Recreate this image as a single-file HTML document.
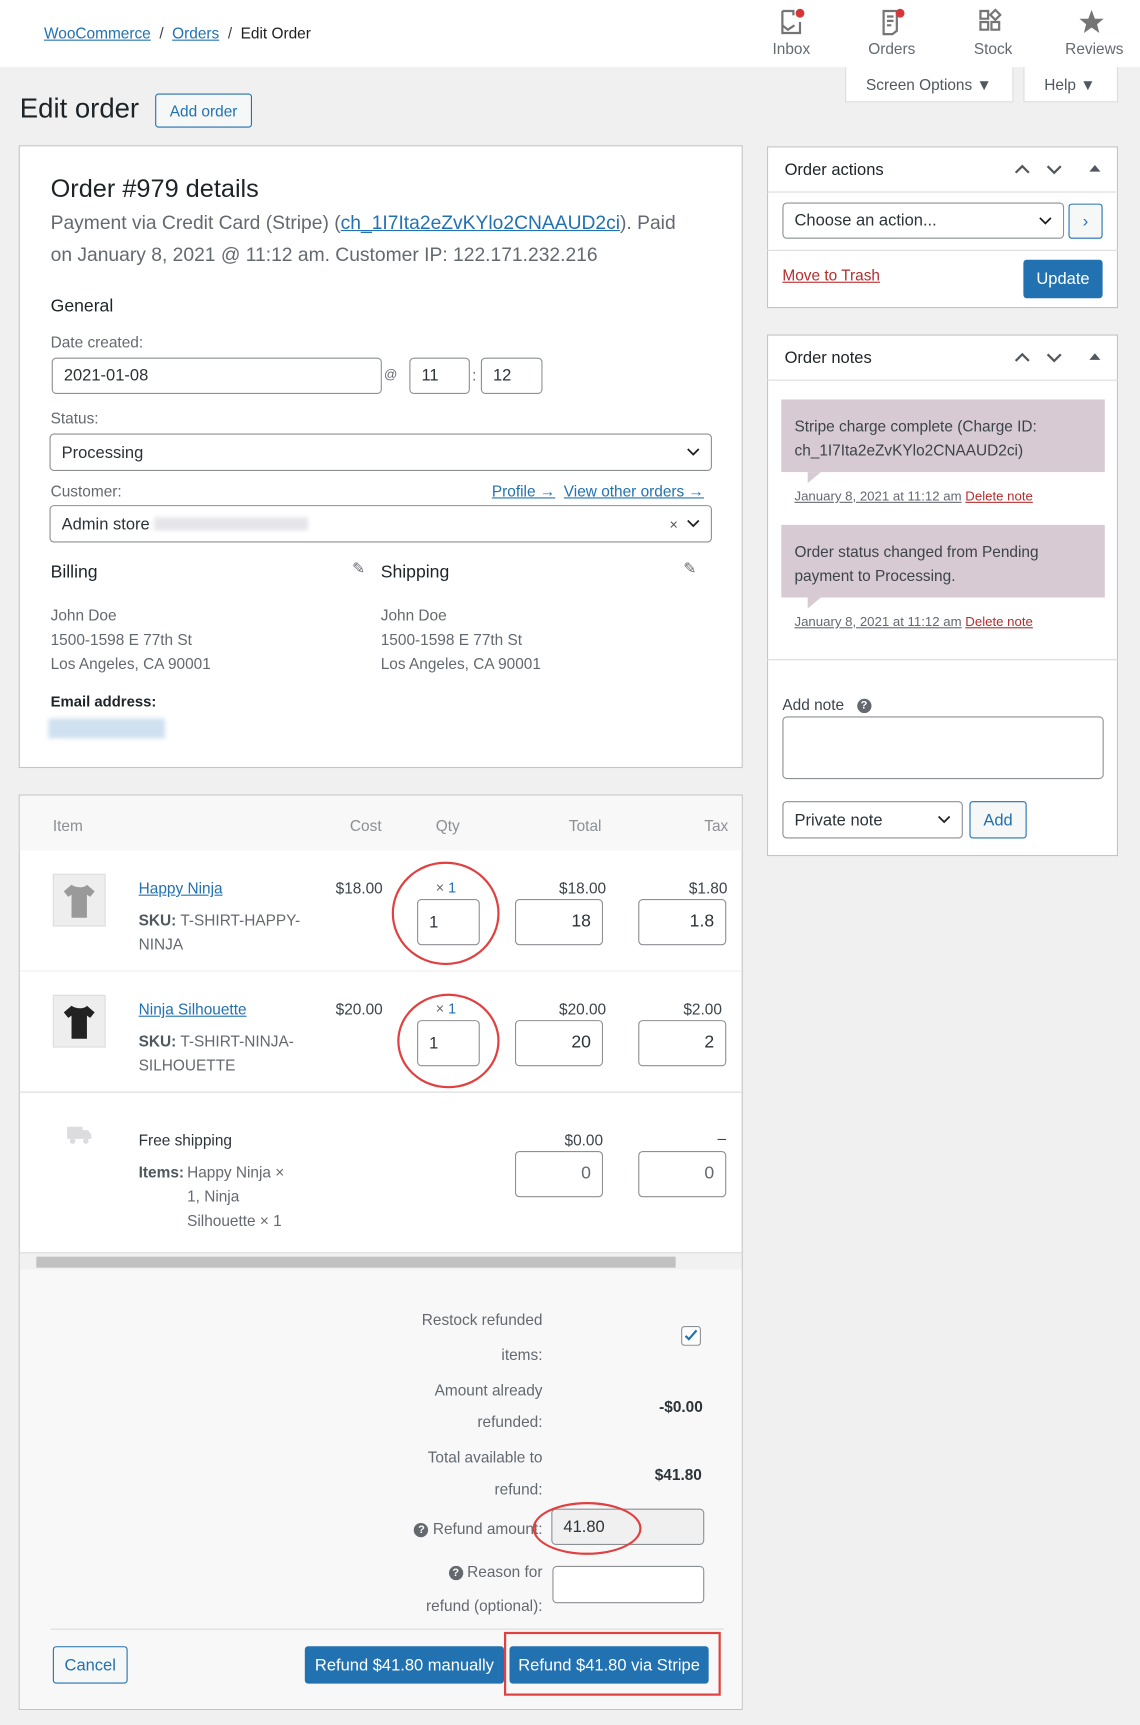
<!DOCTYPE html>
<html><head><meta charset="utf-8"><style>
*{box-sizing:border-box}
html,body{margin:0;padding:0;width:1140px;height:1725px;overflow:hidden;background:#f0f0f1}
#w{position:absolute;left:0;top:0;width:1036px;height:1568px;transform:scale(1.1004);transform-origin:0 0;font-family:"Liberation Sans",sans-serif;color:#3c434a;font-size:14px}
.a{position:absolute}
a,.lk{color:#2271b1;text-decoration:underline}
.box{position:absolute;background:#fff;border:1px solid #c3c4c7}
.inp{position:absolute;background:#fff;border:1px solid #8c8f94;border-radius:4px;font-size:15px;padding:0 10px;display:flex;align-items:center;color:#2c3338}
.btnb{position:absolute;background:#2271b1;color:#fff;border-radius:3px;font-size:15px;display:flex;align-items:center;justify-content:center}
.btno{position:absolute;background:#f6f7f7;border:1px solid #2271b1;color:#2271b1;border-radius:3px;font-size:15px;display:flex;align-items:center;justify-content:center}
.red{position:absolute;border:2px solid #e04040;border-radius:50%}
.g{color:#646970}
.r{text-align:right}
.q{display:inline-block;width:13px;height:13px;border-radius:50%;background:#646970;color:#fff;font-size:10px;text-align:center;line-height:13px;font-weight:bold;vertical-align:1px}
.dd{position:absolute;right:10px;top:50%;margin-top:-4px}
</style></head><body><div id="w">
<svg width="0" height="0" style="position:absolute"><defs><symbol id="dn" viewBox="0 0 12 8"><path d="M1 1l5 5 5-5" fill="none" stroke="#1e1e1e" stroke-width="1.6"/></symbol></defs></svg>
<div class="a" style="left:0;top:0;width:1036px;height:61px;background:#fff"></div>
<div class="a" style="left:40px;top:22px;font-size:14px"><a>WooCommerce</a> &nbsp;/&nbsp; <a>Orders</a> &nbsp;/&nbsp; <span style="color:#1e1e1e">Edit Order</span></div>
<div class="a g" style="left:702px;top:36px;font-size:14px">Inbox</div>
<div class="a g" style="left:789px;top:36px;font-size:14px">Orders</div>
<div class="a g" style="left:885px;top:36px;font-size:14px">Stock</div>
<div class="a g" style="left:968px;top:36px;font-size:14px">Reviews</div>
<svg class="a" style="left:705px;top:6px" width="300" height="28" fill="none" stroke="#757575" stroke-width="2">
<path d="M6 4h10v4M6 4v20h16V14M6 17l5 4 6-4"/><circle cx="22" cy="6" r="4" fill="#d63638" stroke="none"/>
<path d="M98 4h12v18l-4 3H98zM101 9h6M101 13h6M101 17h4"/><circle cx="113" cy="6" r="4" fill="#d63638" stroke="none"/>
<path d="M186 4h7v7h-7zM186 14h7v7h-7zM196 14h7v7h-7zM199.5 3l4.5 4.5-4.5 4.5-4.5-4.5z"/>
<path d="M287 3l3 8h8l-6 5 2 8-7-5-7 5 2-8-6-5h8z" fill="#757575" stroke="none"/></svg>
<div class="a" style="left:768px;top:61px;width:153px;height:32px;background:#fff;border:1px solid #dcdcde;border-top:0;font-size:14px;color:#50575e;padding:8px 0 0 18px">Screen Options ▼</div>
<div class="a" style="left:930px;top:61px;width:86px;height:32px;background:#fff;border:1px solid #dcdcde;border-top:0;font-size:14px;color:#50575e;padding:8px 0 0 18px">Help ▼</div>
<div class="a" style="left:18px;top:85px;font-size:25px;color:#1d2327">Edit order</div>
<div class="btno" style="left:141px;top:85px;width:88px;height:31px;font-size:14px">Add order</div>

<div class="box" style="left:17px;top:132px;width:658px;height:566px"></div>
<div class="a" style="left:46px;top:158px;font-size:23px;color:#1d2327">Order #979 details</div>
<div class="a" style="left:46px;top:188px;font-size:17.5px;color:#646970;line-height:29px;width:580px">Payment via Credit Card (Stripe) (<a>ch_1I7Ita2eZvKYlo2CNAAUD2ci</a>). Paid on January 8, 2021 @ 11:12 am. Customer IP: 122.171.232.216</div>
<div class="a" style="left:46px;top:270px;font-size:16px;color:#1d2327">General</div>
<div class="a g" style="left:46px;top:303px">Date created:</div>
<div class="inp" style="left:47px;top:325px;width:300px;height:33px">2021-01-08</div>
<div class="a g" style="left:349px;top:333px;font-size:12px">@</div>
<div class="inp" style="left:372px;top:325px;width:55px;height:33px">11</div>
<div class="a g" style="left:429px;top:333px">:</div>
<div class="inp" style="left:437px;top:325px;width:56px;height:33px">12</div>
<div class="a g" style="left:46px;top:372px">Status:</div>
<div class="inp" style="left:45px;top:394px;width:602px;height:34px">Processing<svg class="dd" width="12" height="8"><use href="#dn"/></svg></div>
<div class="a g" style="left:46px;top:438px">Customer:</div>
<div class="a" style="left:447px;top:438px"><a>Profile →</a> &nbsp;<a>View other orders →</a></div>
<div class="inp" style="left:45px;top:459px;width:602px;height:34px">Admin store <span style="display:inline-block;width:140px;height:12px;background:#e6e6ea;margin-left:4px;filter:blur(2px)"></span><span style="position:absolute;right:30px;font-size:13px;color:#555">×</span><svg class="dd" width="12" height="8"><use href="#dn"/></svg></div>
<div class="a" style="left:46px;top:512px;font-size:16px;color:#1d2327">Billing</div>
<div class="a g" style="left:320px;top:508px">✎</div>
<div class="a" style="left:346px;top:512px;font-size:16px;color:#1d2327">Shipping</div>
<div class="a g" style="left:621px;top:508px">✎</div>
<div class="a g" style="left:46px;top:548px;line-height:22px">John Doe<br>1500-1598 E 77th St<br>Los Angeles, CA 90001</div>
<div class="a g" style="left:346px;top:548px;line-height:22px">John Doe<br>1500-1598 E 77th St<br>Los Angeles, CA 90001</div>
<div class="a" style="left:46px;top:630px;color:#1d2327;font-weight:bold;font-size:13.5px">Email address:</div>
<div class="a" style="left:44px;top:653px;width:106px;height:18px;background:#cfe0f0;filter:blur(2px)"></div>

<div class="box" style="left:697px;top:133px;width:319px;height:147px"></div>
<div class="a" style="left:697px;top:174px;width:319px;border-top:1px solid #dcdcde"></div>
<div class="a" style="left:697px;top:227px;width:319px;border-top:1px solid #dcdcde"></div>
<div class="a" style="left:713px;top:146px;font-size:15px;color:#1d2327">Order actions</div>
<svg class="a" style="left:920px;top:146px" width="82" height="14" fill="none" stroke="#50575e" stroke-width="2"><path d="M3 11l6-6 6 6M32 5l6 6 6-6"/><path d="M70 10l5-6 5 6z" fill="#50575e" stroke="none"/></svg>
<div class="inp" style="left:711px;top:184px;width:256px;height:33px">Choose an action...<svg class="dd" width="12" height="8"><use href="#dn"/></svg></div>
<div class="btno" style="left:971px;top:185px;width:31px;height:32px">›</div>
<div class="a" style="left:711px;top:242px;color:#b32d2e;text-decoration:underline">Move to Trash</div>
<div class="btnb" style="left:930px;top:236px;width:72px;height:35px">Update</div>

<div class="box" style="left:697px;top:304px;width:319px;height:474px"></div>
<div class="a" style="left:697px;top:345px;width:319px;border-top:1px solid #dcdcde"></div>
<div class="a" style="left:697px;top:599px;width:319px;border-top:1px solid #dcdcde"></div>
<div class="a" style="left:713px;top:317px;font-size:15px;color:#1d2327">Order notes</div>
<svg class="a" style="left:920px;top:317px" width="82" height="14" fill="none" stroke="#50575e" stroke-width="2"><path d="M3 11l6-6 6 6M32 5l6 6 6-6"/><path d="M70 10l5-6 5 6z" fill="#50575e" stroke="none"/></svg>
<div class="a" style="left:710px;top:363px;width:294px;height:66px;background:#d7cad2;padding:13px 12px;line-height:22px;font-size:14px">Stripe charge complete (Charge ID: ch_1I7Ita2eZvKYlo2CNAAUD2ci)</div>
<div class="a" style="left:734px;top:429px;border-right:12px solid transparent;border-top:10px solid #d7cad2"></div>
<div class="a g" style="left:722px;top:444px;font-size:12px"><u>January 8, 2021 at 11:12 am</u> <span style="color:#b32d2e;text-decoration:underline">Delete note</span></div>
<div class="a" style="left:710px;top:477px;width:294px;height:66px;background:#d7cad2;padding:13px 12px;line-height:22px;font-size:14px">Order status changed from Pending payment to Processing.</div>
<div class="a" style="left:734px;top:543px;border-right:12px solid transparent;border-top:10px solid #d7cad2"></div>
<div class="a g" style="left:722px;top:558px;font-size:12px"><u>January 8, 2021 at 11:12 am</u> <span style="color:#b32d2e;text-decoration:underline">Delete note</span></div>
<div class="a" style="left:711px;top:632px;font-size:14px">Add note &nbsp; <span class="q">?</span></div>
<div class="inp" style="left:711px;top:651px;width:292px;height:57px"></div>
<div class="inp" style="left:711px;top:728px;width:164px;height:34px">Private note<svg class="dd" width="12" height="8"><use href="#dn"/></svg></div>
<div class="btno" style="left:881px;top:728px;width:52px;height:34px">Add</div>

<div class="box" style="left:17px;top:722px;width:658px;height:832px"></div>
<div class="a" style="left:18px;top:723px;width:656px;height:50px;background:#f8f8f8"></div>
<div class="a g" style="left:48px;top:742px;font-size:14px;color:#8c8f94">Item</div>
<div class="a" style="left:318px;top:742px;color:#8c8f94">Cost</div>
<div class="a" style="left:396px;top:742px;color:#8c8f94">Qty</div>
<div class="a" style="left:517px;top:742px;color:#8c8f94">Total</div>
<div class="a" style="left:640px;top:742px;color:#8c8f94">Tax</div>
<div class="a" style="left:48px;top:794px;width:48px;height:48px;background:#eee;border:1px solid #ddd;text-align:center"><svg width="30" height="34" style="margin-top:7px"><path d="M8 2l-7 6 4 5 3-2v21h14V11l3 2 4-5-7-6c-2 3-10 3-14 0z" fill="#9a9a9a"/></svg></div>
<div class="a" style="left:48px;top:904px;width:48px;height:48px;background:#eee;border:1px solid #ddd;text-align:center"><svg width="30" height="34" style="margin-top:7px"><path d="M8 2l-7 6 4 5 3-2v21h14V11l3 2 4-5-7-6c-2 3-10 3-14 0z" fill="#222"/></svg></div>
<div class="a" style="left:126px;top:799px"><a>Happy Ninja</a></div>
<div class="a g" style="left:126px;top:825px;line-height:22px;width:150px"><b style="color:#50575e">SKU:</b> T-SHIRT-HAPPY-NINJA</div>
<div class="a" style="left:305px;top:799px">$18.00</div>
<div class="a g" style="left:396px;top:799px;font-size:13px">× <span style="color:#2271b1">1</span></div>
<div class="inp" style="left:379px;top:817px;width:57px;height:42px">1</div>
<div class="a" style="left:508px;top:799px">$18.00</div>
<div class="inp" style="left:468px;top:817px;width:80px;height:42px;justify-content:flex-end;font-size:16px">18</div>
<div class="a" style="left:626px;top:799px">$1.80</div>
<div class="inp" style="left:580px;top:817px;width:80px;height:42px;justify-content:flex-end;font-size:16px">1.8</div>
<div class="red" style="left:356px;top:783px;width:98px;height:94px"></div>
<div class="a" style="left:18px;top:882px;width:656px;border-top:1px solid #eee"></div>
<div class="a" style="left:126px;top:909px"><a>Ninja Silhouette</a></div>
<div class="a g" style="left:126px;top:935px;line-height:22px;width:150px"><b style="color:#50575e">SKU:</b> T-SHIRT-NINJA-SILHOUETTE</div>
<div class="a" style="left:305px;top:909px">$20.00</div>
<div class="a g" style="left:396px;top:909px;font-size:13px">× <span style="color:#2271b1">1</span></div>
<div class="inp" style="left:379px;top:927px;width:57px;height:42px">1</div>
<div class="a" style="left:508px;top:909px">$20.00</div>
<div class="inp" style="left:468px;top:927px;width:80px;height:42px;justify-content:flex-end;font-size:16px">20</div>
<div class="a" style="left:621px;top:909px">$2.00</div>
<div class="inp" style="left:580px;top:927px;width:80px;height:42px;justify-content:flex-end;font-size:16px">2</div>
<div class="red" style="left:361px;top:903px;width:93px;height:86px"></div>
<div class="a" style="left:18px;top:992px;width:656px;border-top:1px solid #dcdcde"></div>
<svg class="a" style="left:60px;top:1022px" width="24" height="20"><path d="M1 2h14v11H1zM15 5h5l3 4v4h-8z" fill="#dcdcde"/><circle cx="6" cy="15" r="2.5" fill="#dcdcde"/><circle cx="18" cy="15" r="2.5" fill="#dcdcde"/></svg>
<div class="a" style="left:126px;top:1028px;color:#2c3338">Free shipping</div>
<div class="a g" style="left:126px;top:1054px;line-height:22px"><b style="color:#50575e">Items:</b></div>
<div class="a g" style="left:170px;top:1054px;line-height:22px;width:100px">Happy Ninja × 1, Ninja Silhouette × 1</div>
<div class="a" style="left:513px;top:1028px">$0.00</div>
<div class="inp" style="left:468px;top:1046px;width:80px;height:42px;justify-content:flex-end;font-size:16px;color:#646970">0</div>
<div class="a" style="left:652px;top:1026px">–</div>
<div class="inp" style="left:580px;top:1046px;width:80px;height:42px;justify-content:flex-end;font-size:16px;color:#646970">0</div>
<div class="a" style="left:18px;top:1138px;width:656px;height:16px;background:#f1f1f1;border-top:1px solid #dcdcde"></div>
<div class="a" style="left:33px;top:1142px;width:581px;height:10px;background:#c1c1c1"></div>
<div class="a" style="left:18px;top:1154px;width:656px;height:399px;background:#f8f8f8"></div>
<div class="a r g" style="left:300px;top:1183px;width:193px;line-height:32px">Restock refunded<br>items:</div>
<div class="a" style="left:619px;top:1205px;width:18px;height:18px;border:1px solid #8c8f94;border-radius:3px;background:#fff"><svg width="16" height="16"><path d="M3 8l3 3 7-8" fill="none" stroke="#2271b1" stroke-width="2"/></svg></div>
<div class="a r g" style="left:300px;top:1249px;width:193px;line-height:29px">Amount already<br>refunded:</div>
<div class="a" style="left:599px;top:1270px;font-weight:bold;color:#2c3338">-$0.00</div>
<div class="a r g" style="left:300px;top:1310px;width:193px;line-height:29px">Total available to<br>refund:</div>
<div class="a" style="left:595px;top:1332px;font-weight:bold;color:#2c3338">$41.80</div>
<div class="a r g" style="left:300px;top:1381px;width:193px"><span class="q">?</span> Refund amount:</div>
<div class="inp" style="left:501px;top:1371px;width:139px;height:33px;background:#f0f0f1">41.80</div>
<div class="red" style="left:484px;top:1365px;width:99px;height:48px"></div>
<div class="a r g" style="left:300px;top:1413px;width:193px;line-height:31px"><span class="q">?</span> Reason for<br>refund (optional):</div>
<div class="inp" style="left:502px;top:1423px;width:138px;height:34px"></div>
<div class="a" style="left:46px;top:1480px;width:612px;border-top:1px solid #dcdcde"></div>
<div class="btno" style="left:48px;top:1496px;width:68px;height:34px">Cancel</div>
<div class="btnb" style="left:277px;top:1496px;width:181px;height:34px">Refund $41.80 manually</div>
<div class="btnb" style="left:463px;top:1496px;width:181px;height:34px">Refund $41.80 via Stripe</div>
<div class="a" style="left:458px;top:1483px;width:197px;height:58px;border:2px solid #e04040"></div>
</div></body></html>
